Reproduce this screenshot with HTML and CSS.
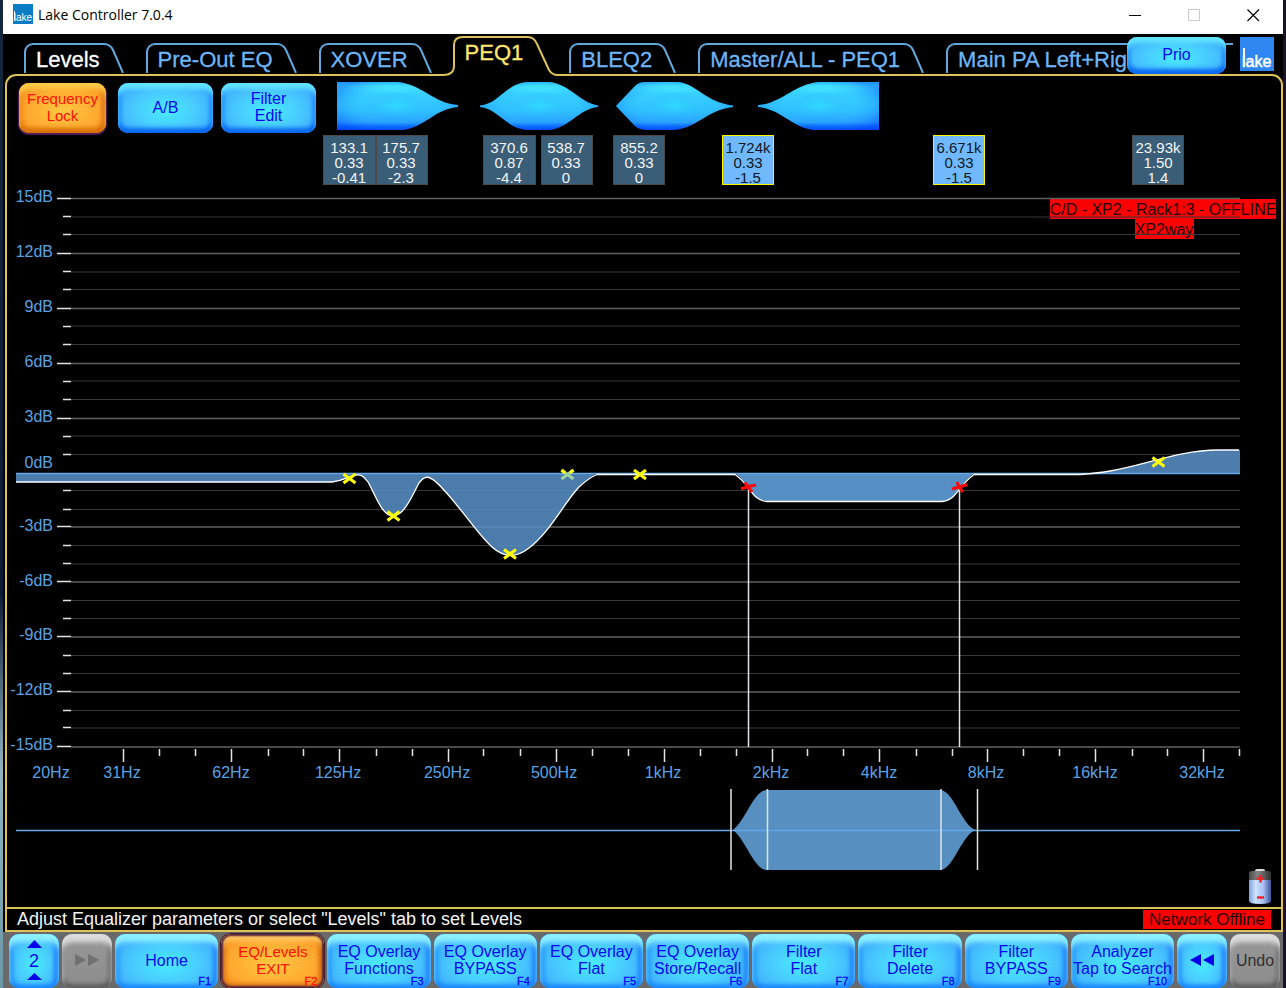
FILE: index.html
```html
<!DOCTYPE html>
<html lang="en">
<head>
<meta charset="utf-8">
<title>Lake Controller 7.0.4</title>
<link rel="stylesheet" href="styles.css">
</head>
<body>
<div class="app">
  <header class="titlebar">
    <svg class="app-icon" viewBox="0 0 20 20" aria-hidden="true"><rect width="20" height="20" fill="#0a7cc4"/><text x="10" y="17" text-anchor="middle" class="icon-word">lake</text><path d="M1.500 7V17" stroke="#fff"/></svg>
    <h1 class="title">Lake Controller 7.0.4</h1>
    <button class="win-btn" aria-label="Minimize"><svg width="13" height="13"><path d="M0 6.500H12" stroke="#000"/></svg></button>
    <button class="win-btn" aria-label="Maximize" disabled><svg width="13" height="13"><path d="M.5.5H11.500V11.500H.5Z" fill="none" stroke="#c8c8c8"/></svg></button>
    <button class="win-btn" aria-label="Close"><svg width="13" height="13"><path d="M.5.5L12 12M12 .5L.5 12" stroke="#000" stroke-width="1.200"/></svg></button>
  </header>

  <div class="tabbar">
    <nav class="tabs">
      <button class="tab tab-white"><span class="tab-label">Levels</span><svg class="slant" viewBox="0 0 23 30"><path d="M0 1H3Q9 1 12 7L22 30"/></svg></button>
      <button class="tab"><span class="tab-label">Pre-Out EQ</span><svg class="slant" viewBox="0 0 23 30"><path d="M0 1H3Q9 1 12 7L22 30"/></svg></button>
      <button class="tab"><span class="tab-label">XOVER</span><svg class="slant" viewBox="0 0 23 30"><path d="M0 1H3Q9 1 12 7L22 30"/></svg></button>
      <button class="tab tab-active"><svg class="foot" viewBox="0 0 20 40"><path d="M0 39Q11 39 11 30V9Q11 1 20 1V40H0"  class="face"/><path d="M0 39Q11 39 11 30V9Q11 1 20 1"/></svg><span class="tab-label">PEQ1</span><svg class="sweep" viewBox="0 0 38 40"><path d="M0 1H5Q11 1 14 8L26 34Q29 39 35 39H38V40H0" class="face"/><path d="M0 1H5Q11 1 14 8L26 34Q29 39 35 39H38"/></svg></button>
      <button class="tab"><span class="tab-label">BLEQ2</span><svg class="slant" viewBox="0 0 23 30"><path d="M0 1H3Q9 1 12 7L22 30"/></svg></button>
      <button class="tab"><span class="tab-label">Master/ALL - PEQ1</span><svg class="slant" viewBox="0 0 23 30"><path d="M0 1H3Q9 1 12 7L22 30"/></svg></button>
      <button class="tab tab-last"><span class="tab-label">Main PA Left+Rig</span></button>
    </nav>
    <button class="btn prio">Prio</button>
    <svg class="brand" viewBox="0 0 34 34" role="img" aria-label="lake"><rect width="34" height="34" fill="#2f86f0"/><text x="2" y="30" class="brand-word">lake</text><path d="M4 11V30" stroke="#fff" stroke-width="2"/></svg>
  </div>

  <main class="frame">
    <div class="toolbar">
      <button class="btn btn-on lock">Frequency<br>Lock</button>
      <button class="btn">A/B</button>
      <button class="btn">Filter<br>Edit</button>
      <div class="shapes">
        <button class="shape" aria-label="Low shelf"><svg width="122" height="49" viewBox="0 0 122 49">
          <defs>
            <linearGradient id="glass" x1="0" y1="0" x2="0" y2="1"><stop offset="0" stop-color="#30d8ff"/><stop offset=".08" stop-color="#4af4ff"/><stop offset=".25" stop-color="#36d0ff"/><stop offset=".6" stop-color="#2fc0ff"/><stop offset=".84" stop-color="#2aa4ff"/><stop offset=".92" stop-color="#0868ff"/><stop offset="1" stop-color="#0038e8"/></linearGradient>
            <radialGradient id="shade" cx=".5" cy=".5" r=".6"><stop offset="0" stop-color="#30e8ff" stop-opacity=".6"/><stop offset=".5" stop-color="#30b0ff" stop-opacity="0"/><stop offset="1" stop-color="#0a50ff" stop-opacity=".5"/></radialGradient>
          </defs>
          <g id="shelf"><path d="M0 0H60C85 2 98 22 121 23V25C98 27 88 45 66 48H0Z" fill="url(#glass)"/><path d="M0 0H60C85 2 98 22 121 23V25C98 27 88 45 66 48H0Z" fill="url(#shade)"/></g></svg></button>
        <button class="shape" aria-label="Parametric"><svg width="118" height="49" viewBox="0 0 118 49"><path d="M0 23.500C19 22 26 1 48 0H69C90 2 100 21 118 23.500V25C98 27 90 46 69 48H48C26 47 19 27 0 25Z" fill="url(#glass)"/><path d="M0 23.500C19 22 26 1 48 0H69C90 2 100 21 118 23.500V25C98 27 90 46 69 48H48C26 47 19 27 0 25Z" fill="url(#shade)"/></svg></button>
        <button class="shape tight" aria-label="Mesa"><svg width="118" height="49" viewBox="0 0 118 49"><path d="M1 24L20 4Q24 0 30 0H63C82 2 90 20 118 23.500V25C92 28 82 46 59 48H30Q22 47 19 43Z" fill="url(#glass)"/><path d="M1 24L20 4Q24 0 30 0H63C82 2 90 20 118 23.500V25C92 28 82 46 59 48H30Q22 47 19 43Z" fill="url(#shade)"/></svg></button>
        <button class="shape wide" aria-label="High shelf"><svg width="122" height="49" viewBox="0 0 122 49"><use href="#shelf" transform="matrix(-1 0 0 1 122 0)"/></svg></button>
      </div>
    </div>

    <svg class="chart" viewBox="7 133 1274 774" role="img" aria-label="Parametric equalizer response">
      <g class="warn">
        <rect x="1050" y="199" width="226" height="20"/><rect x="1135" y="219" width="59" height="20"/>
        <text x="1163" y="215">C/D - XP2 - Rack1:3 - OFFLINE</text>
        <text x="1164" y="235">XP2way</text>
      </g>

      <path class="grid-minor" d="M71 217H1240M71 234.500H1240M71 272H1240M71 289.500H1240M71 326H1240M71 344.500H1240M71 381H1240M71 399.500H1240M71 436H1240M71 454.500H1240M71 490.500H1240M71 509.500H1240M71 545.500H1240M71 564H1240M71 600.500H1240M71 618.500H1240M71 655.500H1240M71 673.500H1240M71 710.500H1240M71 728H1240"/>
      <path class="grid-major" d="M71 198.500H1240M71 253.500H1240M71 308.500H1240M71 363.500H1240M71 418.500H1240M71 527H1240M71 582H1240M71 637H1240M71 692H1240M71 747H1240"/>
      <path class="tick" d="M57 198.500H71M57 253.500H71M57 308.500H71M57 363.500H71M57 418.500H71M57 526.500H71M57 581.500H71M57 636.500H71M57 691.500H71M57 746.500H71
        M63 216.500H71M63 234.500H71M63 271.500H71M63 289.500H71M63 326.500H71M63 344.500H71M63 381.500H71M63 399.500H71M63 436.500H71M63 454.500H71M63 490.500H71M63 509.500H71M63 545.500H71M63 563.500H71M63 600.500H71M63 618.500H71M63 655.500H71M63 673.500H71M63 710.500H71M63 727.500H71"/>
      <path class="tick" d="M123.500 749V762M231.500 749V762M339.500 749V762M448.500 749V762M556.500 749V762M664.500 749V762M772.500 749V762M879.500 749V762M987.500 749V762M1095.500 749V762M1203.500 749V762
        M159.500 749V756M195.500 749V756M268.500 749V756M303.500 749V756M376.500 749V756M412.500 749V756M483.500 749V756M520.500 749V756M592.500 749V756M628.500 749V756M700.500 749V756M736.500 749V756M807.500 749V756M843.500 749V756M916.500 749V756M952.500 749V756M1023.500 749V756M1059.500 749V756M1132.500 749V756M1167.500 749V756M1239.500 749V756"/>

      <g class="axis axis-db">
        <text x="53" y="202">15dB</text><text x="53" y="257">12dB</text><text x="53" y="312">9dB</text><text x="53" y="367">6dB</text><text x="53" y="422">3dB</text><text x="53" y="468">0dB</text><text x="53" y="531">-3dB</text><text x="53" y="586">-6dB</text><text x="53" y="640">-9dB</text><text x="53" y="695">-12dB</text><text x="53" y="750">-15dB</text>
      </g>
      <g class="axis axis-hz">
        <text x="51" y="778">20Hz</text><text x="122" y="778">31Hz</text><text x="231" y="778">62Hz</text><text x="338" y="778">125Hz</text><text x="447" y="778">250Hz</text><text x="554" y="778">500Hz</text><text x="663" y="778">1kHz</text><text x="771" y="778">2kHz</text><text x="879" y="778">4kHz</text><text x="986" y="778">8kHz</text><text x="1095" y="778">16kHz</text><text x="1202" y="778">32kHz</text>
      </g>

      <g class="area">
        <path d="M16 473V482H332C342 481 346 478 352 476C360 473 364 476 368 482C376 496 382 516 393 516C404 516 412 496 419 483C425 475 429 476 436 482C456 500 476 533 492 547Q510 563 529 548C550 532 564 503 579 487Q590 477 597 473Z"/>
        <path class="picked" d="M735 473C750 484 752 501 767 501H942C956 501 958 486 974 473Z"/>
        <path d="M1095 474C1140 467 1180 450 1218 450H1240V474Z"/>
      </g>
      <path d="M16 473.500H1240" stroke="#64a8ea" stroke-width="1.500"/>
      <path class="curve" d="M16 482H332C342 481 346 478 352 476C360 473 364 476 368 482C376 496 382 516 393 516C404 516 412 496 419 483C425 475 429 476 436 482C456 500 476 533 492 547Q510 563 529 548C550 532 564 503 579 487Q590 477 597 474.500H735C750 484 752 501 767 501.500H942C956 501 958 486 974 474.500H1080Q1100 473 1110 471C1145 465 1180 450 1218 450H1239"/>
      <path class="handle" d="M748.500 488V747M959.500 488V747"/>

      <g class="mark">
        <path d="M343.500 474L355.500 483M355.500 474L343.500 483M387.500 511.500L399.500 520.500M399.500 511.500L387.500 520.500M504 549.500L516 558.500M516 549.500L504 558.500M634 470L646 479M646 470L634 479M1152.500 457.500L1164.500 466.500M1164.500 457.500L1152.500 466.500"/>
        <path d="M561.500 470L573.500 479M573.500 470L561.500 479" stroke="#9fd0a0"/>
        <path d="M561.500 470L565 473M573.500 470L570 473"/>
        <path class="mark-red" d="M741 489L748 486.500L756 485M744.500 482.500L748 486.500L752 492"/>
        <path class="mark-red" d="M952 489L959 487L967 484.500M957 482L959 487L963 492"/>
      </g>

      <g class="node">
        <rect x="323.500" y="135.500" width="52" height="49"/><text x="349" y="153">133.1</text><text x="349" y="168">0.33</text><text x="349" y="183">-0.41</text>
        <rect x="376.500" y="135.500" width="51" height="49"/><text x="401" y="153">175.7</text><text x="401" y="168">0.33</text><text x="401" y="183">-2.3</text>
        <rect x="483.500" y="135.500" width="52" height="49"/><text x="509" y="153">370.6</text><text x="509" y="168">0.87</text><text x="509" y="183">-4.4</text>
        <rect x="541.500" y="135.500" width="51" height="49"/><text x="566" y="153">538.7</text><text x="566" y="168">0.33</text><text x="566" y="183">0</text>
        <rect x="613.500" y="135.500" width="51" height="49"/><text x="639" y="153">855.2</text><text x="639" y="168">0.33</text><text x="639" y="183">0</text>
        <rect x="1132.500" y="135.500" width="51" height="49"/><text x="1158" y="153">23.93k</text><text x="1158" y="168">1.50</text><text x="1158" y="183">1.4</text>
      </g>
      <g class="node node-picked">
        <rect x="722.500" y="135.500" width="51" height="49"/><text x="748" y="153">1.724k</text><text x="748" y="168">0.33</text><text x="748" y="183">-1.5</text>
        <rect x="933.500" y="135.500" width="51" height="49"/><text x="959" y="153">6.671k</text><text x="959" y="168">0.33</text><text x="959" y="183">-1.5</text>
      </g>

      <path d="M733 830C746 820 754 790 767 790H941C954 792 962 826 976 830C962 834 954 868 941 870H767C754 870 746 840 733 830Z" fill="#568fc0"/>
      <path d="M16 830.500H1240" stroke="#64a8ea" stroke-width="1.500"/>
      <path class="handle" d="M731 789V870M767.500 789V870M941 789V870M977.500 789V870"/>

      <defs><linearGradient id="cell" x1="0" x2="1"><stop offset="0" stop-color="#7f9fdc"/><stop offset=".3" stop-color="#cfe2ff"/><stop offset=".65" stop-color="#a8c0f4"/><stop offset="1" stop-color="#3c5298"/></linearGradient>
      <linearGradient id="cap" x1="0" x2="1"><stop offset="0" stop-color="#4a4a4a"/><stop offset=".4" stop-color="#858585"/><stop offset="1" stop-color="#303030"/></linearGradient></defs>
      <rect x="1255" y="869" width="10" height="5" rx="2" fill="#ddd"/>
      <path d="M1249 873Q1249 871 1252 871H1268Q1271 871 1271 873V882H1249Z" fill="url(#cap)"/>
      <path d="M1249 880H1271V901Q1271 904 1260 904Q1249 904 1249 901Z" fill="url(#cell)"/>
      <path d="M1256.500 878.500H1264M1260.500 875V882.500M1257 897.500H1264" stroke="#f02428" stroke-width="2.500"/>
    </svg>

    <div class="status">
      <p class="hint">Adjust Equalizer parameters or select "Levels" tab to set Levels</p>
      <p class="network">Network Offline</p>
    </div>
  </main>

  <footer class="keys">
    <button class="btn key key-small" aria-label="Page 2"><svg width="15" height="42" viewBox="0 0 15 42"><path d="M0 9L7.500 1L15 9ZM0 41L7.500 34L15 41Z" fill="#0000e8"/><text x="7" y="28" text-anchor="middle" class="page">2</text></svg></button>
    <button class="btn key key-small btn-off" aria-label="Next" disabled><svg width="24" height="12"><path d="M0 0L11 6L0 12ZM13 0L24 6L13 12Z" fill="#707070"/></svg></button>
    <button class="btn key">Home<kbd>F1</kbd></button>
    <button class="btn key btn-on">EQ/Levels<br>EXIT<kbd>F2</kbd></button>
    <button class="btn key">EQ Overlay<br>Functions<kbd>F3</kbd></button>
    <button class="btn key">EQ Overlay<br>BYPASS<kbd>F4</kbd></button>
    <button class="btn key">EQ Overlay<br>Flat<kbd>F5</kbd></button>
    <button class="btn key">EQ Overlay<br>Store/Recall<kbd>F6</kbd></button>
    <button class="btn key">Filter<br>Flat<kbd>F7</kbd></button>
    <button class="btn key">Filter<br>Delete<kbd>F8</kbd></button>
    <button class="btn key">Filter<br>BYPASS<kbd>F9</kbd></button>
    <button class="btn key">Analyzer<br>Tap to Search<kbd>F10</kbd></button>
    <button class="btn key key-small" aria-label="Back"><svg width="24" height="12"><path d="M11 0L0 6L11 12ZM24 0L13 6L24 12Z" fill="#0000e8"/></svg></button>
    <button class="btn key key-small btn-off" disabled>Undo</button>
  </footer>
</div>
</body>
</html>
```
FILE: styles.css
```css
* { box-sizing: border-box; }

body {
  margin: 0;
  padding: 0 3px;
  background: linear-gradient(#12283c 0, #0c1c38 60%, #8fb4c0 78%, #6c98a8 100%) left / 3px 100% no-repeat, #1c1226;
  font-family: "Liberation Sans", Arial, sans-serif;
}

button { margin: 0; padding: 0; border: 0; background: none; font: inherit; color: inherit; }
p, h1 { margin: 0; font-weight: normal; }

.app { background: #000; }

/* Title bar */
.titlebar { display: flex; align-items: center; height: 34px; padding-left: 10px; background: #fff; }
.app-icon { width: 20px; height: 20px; margin-bottom: 6px; }
.icon-word { font-size: 10px; fill: #fff; }
.title { flex: 1; margin-left: 5px; padding-bottom: 4px; font: 14px/20px "Open Sans", "Noto Sans", sans-serif; color: #000; }
.win-btn { display: grid; place-items: center; width: 59px; height: 30px; align-self: flex-start; }

/* Tabs */
.tabbar { position: relative; display: flex; align-items: flex-start; height: 40px; }
.tabs { flex: 1; display: flex; align-items: flex-end; gap: 22px; height: 40px; padding-left: 21px; }
.tab { display: flex; height: 30px; margin-bottom: 1px; font-size: 22px; line-height: 30px; color: #6fb6f8; white-space: nowrap; }
.tab path { fill: none; stroke: #62a8dc; stroke-width: 2; }
.tab-label { height: 30px; padding: 0 1px 0 10px; border: solid #62a8dc; border-width: 2px 0 0 2px; border-top-left-radius: 9px; -webkit-text-stroke: 0.3px currentColor; }
.slant { width: 23px; height: 30px; }
.tab-white { color: #fff; }
.tab-last { flex: 1; min-width: 0; overflow: hidden; }
.tab-last .tab-label { flex: 1; text-align: left; }
.tab-active { position: relative; z-index: 1; height: 40px; margin: 0 -14px -2px -11px; color: #ffe770; }
.tab-active path { stroke: #dcc258; }
.tab-active .face { fill: #000; stroke: none; }
.tab-active .tab-label { height: 40px; padding: 0 0 0 2px; border: solid #dcc258; border-width: 2px 0 0; border-radius: 0; background: #000; }
.foot { width: 20px; height: 40px; }
.sweep { width: 38px; height: 40px; }
.brand { width: 34px; height: 34px; margin: 3px 9px 0 7px; }
.brand-word { font-size: 16px; fill: #fff; stroke: #fff; stroke-width: 0.5; }

/* Glossy buttons */
.btn {
  position: relative;
  width: 95px;
  height: 50px;
  padding-bottom: 2px;
  border-radius: 10px;
  background: radial-gradient(ellipse at 50% 55%, #48ecff 0, #48ccff 45%, #3c9cff 100%);
  box-shadow: inset 0 6px 4px #62e4ff, inset 0 -5px 4px #0a68f0, inset -3px 0 4px #1478f8, inset 3px 0 4px #1c8cfc;
  font-size: 16px;
  line-height: 17px;
  color: #0808f0;
  white-space: nowrap;
}
.btn-on {
  background: radial-gradient(ellipse at 50% 55%, #ffc840 0, #ffa830 60%, #f88818 100%);
  box-shadow: inset 0 6px 5px #ffcc48, inset 0 -5px 4px #d87008, inset -4px 0 4px #d86c10, inset 4px 0 4px #f08818, 0 1px 1px 1px #50205c;
  color: #ff1000;
  font-size: 15px;
}
.btn-off {
  background: linear-gradient(#989898, #8c8c8c);
  color: #303030;
}
.prio { position: absolute; top: 3px; right: 57px; z-index: 2; width: 99px; height: 37px; }

/* Main frame */
.frame { margin-left: 2px; border: 2px solid #dcc258; border-radius: 11px 11px 0 0; }
.toolbar { display: flex; gap: 8px; height: 57px; padding: 7px 0 0 12px; }
.lock { width: 87px; margin-right: 4px; }
.shapes { display: flex; gap: 21px; margin: -1px 0 0 13px; }
.shape { height: 49px; }
.shape svg { display: block; }
.tight { margin-left: -4px; }
.wide { margin-left: 3px; }

/* Response chart */
.chart { display: block; width: 100%; height: auto; font-size: 16px; }
.warn rect { fill: #ff0000; }
.warn text { fill: #200000; text-anchor: middle; }
.grid-minor { stroke: #383838; }
.grid-major { stroke: #606060; stroke-width: 1.5; }
.tick { stroke: #e4e4e4; stroke-width: 1.5; fill: none; }
.axis { fill: #5ba3e3; }
.axis-db { text-anchor: end; }
.axis-hz { text-anchor: middle; }
.area { fill: #568fc5; fill-opacity: 0.87; }
.picked { fill-opacity: 1; }
.curve { fill: none; stroke: #fff; stroke-width: 1.3; }
.handle { stroke: #e0e4e8; stroke-width: 1.5; }
.mark { fill: none; stroke: #ffff10; stroke-width: 3; }
.mark-red { stroke: #ff0808; }
.node { font-size: 15px; text-anchor: middle; }
.node rect { fill: #3a5e78; stroke: #4a4a4a; }
.node text { fill: #f4f4f4; }
.node-picked rect { fill: #70b8ff; stroke: #fff200; }
.node-picked text { fill: #101820; }

/* Status line */
.status { display: flex; justify-content: space-between; align-items: center; height: 23px; padding: 0 10px; border-top: 2px solid #dcc258; font-size: 17px; line-height: 19px; }
.hint { font-size: 18px; color: #f4f4f4; }
.network { padding: 0 6px; background: #ff0000; color: #200000; }

/* Function keys */
.keys { display: flex; gap: 3px; height: 56px; padding: 2px 3px 0 6px; background: #6a6a6a; }
.key { flex: 1 1 0; min-width: 0; height: 54px; box-shadow: inset 0 8px 5px #8cf0ff, inset 0 -3px 4px #1c8cff, inset -4px 0 5px #0c68f8, inset 4px 0 4px #1c90fc; }
.key.btn-on { box-shadow: inset 0 0 2px 2px #50203c, inset 0 7px 5px #ffc860, inset 0 -5px 4px #e07c18, inset -5px 0 4px #d06810, inset 5px 0 4px #e07c18, 0 0 1px 1px #40182c; }
.key.btn-off { box-shadow: inset 0 8px 5px #dcdcdc, inset 0 -4px 4px #606060, inset -3px 0 4px #585858, inset 3px 0 3px #8c8c8c; }
.key-small { display: grid; place-items: center; flex: 0 0 50px; }
kbd { position: absolute; right: 7px; bottom: 1px; font: 11px/11px "Liberation Sans", Arial, sans-serif; -webkit-text-stroke: 0.3px currentColor; }
.page { font-size: 18px; fill: #0808f0; }
```
